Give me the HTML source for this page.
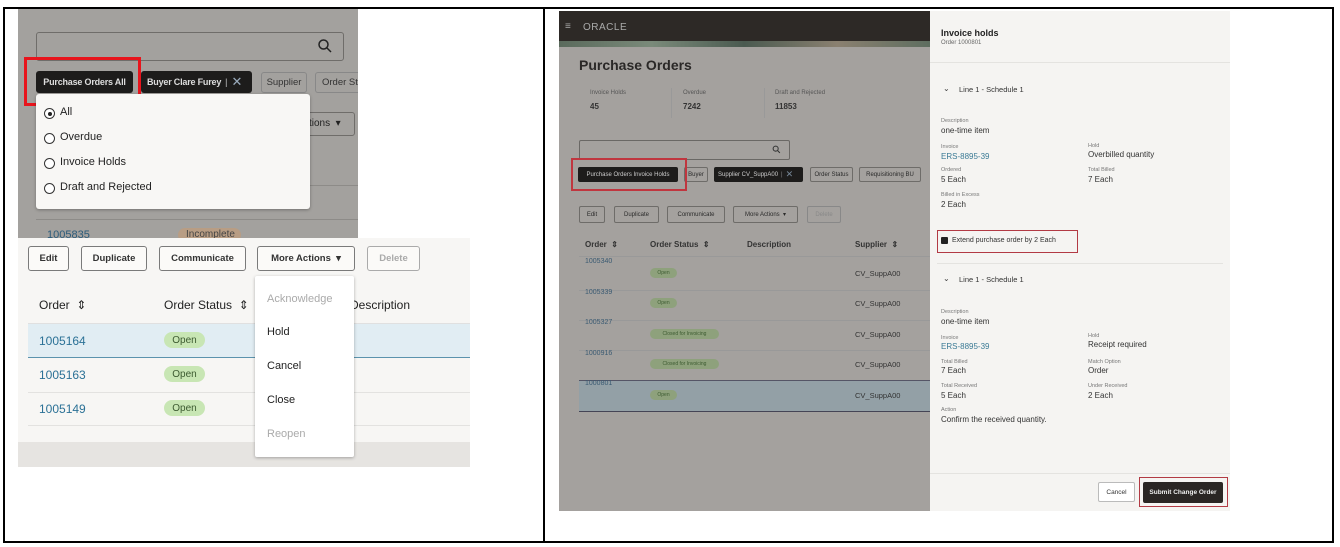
<!DOCTYPE html>
<html><head><meta charset="utf-8"><style>
*{margin:0;padding:0;box-sizing:border-box}
body{width:1340px;height:547px;background:#fff;position:relative;overflow:hidden;font-family:"Liberation Sans",sans-serif;color:#222}
.a{position:absolute}
.t{position:absolute;white-space:nowrap}
.btn{position:absolute;border:1px solid #7a7a7a;border-radius:3px;background:#fbfaf8;font-size:9.5px;color:#333;display:flex;align-items:center;justify-content:center;font-weight:bold;white-space:nowrap}
.rad{position:absolute;width:11px;height:11px;border:1px solid #333;border-radius:50%;background:#fff}
.pill{position:absolute;background:#c8e6b4;border-radius:9px;font-size:10px;color:#3c5a30;display:flex;align-items:center;justify-content:center;white-space:nowrap}
.lbl{position:absolute;font-size:5.5px;color:#777;white-space:nowrap}
.val{position:absolute;font-size:8px;color:#333;white-space:nowrap}
.rbtn{position:absolute;border:1px solid #6e6c69;border-radius:2px;font-size:6px;color:#2a2a2a;display:flex;align-items:center;justify-content:center;white-space:nowrap}
</style></head><body>
<div class="a" style="left:3px;top:7px;width:1331px;height:2px;background:#000"></div>
<div class="a" style="left:3px;top:541px;width:1331px;height:2px;background:#000"></div>
<div class="a" style="left:3px;top:7px;width:2px;height:536px;background:#000"></div>
<div class="a" style="left:1332px;top:7px;width:2px;height:536px;background:#000"></div>
<div class="a" style="left:543px;top:7px;width:2px;height:536px;background:#000"></div>

<div class="a" style="left:18px;top:9px;width:340px;height:229px;background:#a3a19e"></div>
<div class="a" style="left:36px;top:32px;width:308px;height:29px;border:1px solid #6f6d6a;border-radius:3px"></div>
<svg class="a" style="left:317px;top:38px" width="16" height="16" viewBox="0 0 16 16"><circle cx="6.5" cy="6.5" r="4.5" fill="none" stroke="#222" stroke-width="1.5"/><path d="M10 10l4 4" stroke="#222" stroke-width="1.5"/></svg>
<div class="a" style="left:36px;top:71px;width:97px;height:22px;background:#1d1c1b;border-radius:3px;color:#ddd;font-size:9px;font-weight:bold;display:flex;align-items:center;justify-content:center;white-space:nowrap;letter-spacing:-.2px">Purchase Orders All</div>
<div class="a" style="left:141px;top:71px;width:111px;height:22px;background:#1d1c1b;border-radius:3px;color:#ddd;font-size:9px;font-weight:bold;padding-left:6px;display:flex;align-items:center;white-space:nowrap;letter-spacing:-.2px">Buyer Clare Furey <span style="margin-left:4px;color:#888">|</span><span style="margin-left:4px;color:#9ab;font-size:13px;font-weight:normal">✕</span></div>
<div class="a" style="left:261px;top:72px;width:46px;height:21px;border:1px solid #888;border-radius:3px;font-size:9.5px;color:#333;display:flex;align-items:center;justify-content:center">Supplier</div>
<div class="a" style="left:315px;top:72px;width:43px;height:21px;border:1px solid #888;border-right:none;border-radius:3px 0 0 3px;font-size:9.5px;color:#333;padding-left:6px;line-height:19px;overflow:hidden;white-space:nowrap">Order St</div>
<div class="a" style="left:292px;top:112px;width:63px;height:24px;border:1px solid #6f6d6a;border-radius:3px;font-size:10px;color:#222;line-height:22px;padding-left:16px;white-space:nowrap">tions &nbsp;▾</div>
<div class="a" style="left:36px;top:185px;width:322px;height:1px;background:#8d8b88"></div>
<div class="a" style="left:36px;top:219px;width:322px;height:1px;background:#8d8b88"></div>
<div class="a" style="left:178px;top:228px;width:63px;height:14px;background:#b89d84;border-radius:7px"></div>
<div class="t" style="left:47px;top:229px;font-size:11px;color:#2b5b7a">1005835</div>
<div class="t" style="left:186px;top:229px;font-size:10px;color:#444">Incomplete</div>
<div class="a" style="left:24px;top:57px;width:117px;height:49px;border:3px solid #e8141c"></div>
<div class="a" style="left:36px;top:94px;width:274px;height:115px;background:#f8f7f5;border-radius:3px;box-shadow:0 1px 3px rgba(0,0,0,.3)"></div>
<div class="rad" style="left:44px;top:108px"><div style="position:absolute;left:2.5px;top:2.5px;width:4px;height:4px;border-radius:50%;background:#222"></div></div>
<div class="t" style="left:60px;top:106px;font-size:11px;color:#222">All</div>
<div class="rad" style="left:44px;top:133px"></div><div class="t" style="left:60px;top:131px;font-size:11px;color:#222">Overdue</div>
<div class="rad" style="left:44px;top:158px"></div><div class="t" style="left:60px;top:156px;font-size:11px;color:#222">Invoice Holds</div>
<div class="rad" style="left:44px;top:183px"></div><div class="t" style="left:60px;top:181px;font-size:11px;color:#222">Draft and Rejected</div>

<div class="a" style="left:18px;top:238px;width:452px;height:205px;background:#f7f6f4"></div>
<div class="a" style="left:18px;top:442px;width:452px;height:25px;background:#e6e4e1"></div>
<div class="btn" style="left:28px;top:246px;width:41px;height:25px">Edit</div>
<div class="btn" style="left:81px;top:246px;width:66px;height:25px">Duplicate</div>
<div class="btn" style="left:159px;top:246px;width:87px;height:25px">Communicate</div>
<div class="btn" style="left:257px;top:246px;width:98px;height:25px">More Actions &nbsp;▾</div>
<div class="btn" style="left:367px;top:246px;width:53px;height:25px;color:#aaa;border-color:#aaa">Delete</div>
<div class="t" style="left:39px;top:298px;font-size:12px;color:#222">Order &nbsp;⇕</div>
<div class="t" style="left:164px;top:298px;font-size:12px;color:#222">Order Status &nbsp;⇕</div>
<div class="t" style="left:350px;top:298px;font-size:12px;color:#222">Description</div>
<div class="a" style="left:28px;top:323px;width:442px;height:35px;background:#e1edf3;border-bottom:1px solid #5b93ad;border-top:1px solid #e0e0e0"></div>
<div class="a" style="left:28px;top:392px;width:442px;height:1px;background:#e3e2e0"></div>
<div class="a" style="left:28px;top:425px;width:442px;height:1px;background:#e3e2e0"></div>
<div class="t" style="left:39px;top:334px;font-size:12px;color:#2b7196">1005164</div>
<div class="t" style="left:39px;top:368px;font-size:12px;color:#2b7196">1005163</div>
<div class="t" style="left:39px;top:402px;font-size:12px;color:#2b7196">1005149</div>
<div class="pill" style="left:164px;top:332px;width:41px;height:16px">Open</div>
<div class="pill" style="left:164px;top:366px;width:41px;height:16px">Open</div>
<div class="pill" style="left:164px;top:400px;width:41px;height:16px">Open</div>
<div class="a" style="left:255px;top:276px;width:99px;height:181px;background:#fff;border-radius:2px;box-shadow:0 1px 3px rgba(0,0,0,.3)"></div>
<div class="t" style="left:267px;top:293px;font-size:11px;color:#aaa">Acknowledge</div>
<div class="t" style="left:267px;top:326px;font-size:11px;color:#222">Hold</div>
<div class="t" style="left:267px;top:360px;font-size:11px;color:#222">Cancel</div>
<div class="t" style="left:267px;top:394px;font-size:11px;color:#222">Close</div>
<div class="t" style="left:267px;top:428px;font-size:11px;color:#aaa">Reopen</div>

<div class="a" style="left:559px;top:11px;width:371px;height:500px;background:#a4a19e"></div>
<div class="a" style="left:559px;top:11px;width:371px;height:30px;background:#2d2926"></div>
<div class="a" style="left:559px;top:41px;width:371px;height:6px;background:linear-gradient(90deg,#5a6a5c,#7a8a7a,#4a5a50,#8a8070,#5e6e60)"></div>
<div class="t" style="left:565px;top:21px;font-size:10px;color:#aaa">≡</div>
<div class="t" style="left:583px;top:22px;font-size:10px;color:#aaa;letter-spacing:.5px">ORACLE</div>
<div class="t" style="left:579px;top:57px;font-size:14px;font-weight:bold;color:#2a2827">Purchase Orders</div>
<div class="t" style="left:590px;top:90px;font-size:6px;color:#555">Invoice Holds</div>
<div class="t" style="left:590px;top:102px;font-size:8px;font-weight:bold;color:#333">45</div>
<div class="a" style="left:671px;top:88px;width:1px;height:30px;background:#999"></div>
<div class="t" style="left:683px;top:90px;font-size:6px;color:#555">Overdue</div>
<div class="t" style="left:683px;top:102px;font-size:8px;font-weight:bold;color:#333">7242</div>
<div class="a" style="left:764px;top:88px;width:1px;height:30px;background:#999"></div>
<div class="t" style="left:775px;top:90px;font-size:6px;color:#555">Draft and Rejected</div>
<div class="t" style="left:775px;top:102px;font-size:8px;font-weight:bold;color:#333">11853</div>
<div class="a" style="left:579px;top:140px;width:211px;height:20px;border:1px solid #6a6865;border-radius:2px"></div>
<svg class="a" style="left:772px;top:145px" width="9" height="9" viewBox="0 0 16 16"><circle cx="6.5" cy="6.5" r="4.5" fill="none" stroke="#333" stroke-width="1.8"/><path d="M10 10l4 4" stroke="#333" stroke-width="1.8"/></svg>
<div class="a" style="left:578px;top:167px;width:100px;height:15px;background:#1d1c1b;border-radius:2px;font-size:6px;color:#ccc;display:flex;align-items:center;justify-content:center;white-space:nowrap">Purchase Orders Invoice Holds</div>
<div class="rbtn" style="left:684px;top:167px;width:24px;height:15px">Buyer</div>
<div class="a" style="left:714px;top:167px;width:89px;height:15px;background:#1d1c1b;border-radius:2px;font-size:6px;color:#ccc;display:flex;align-items:center;padding-left:4px;white-space:nowrap">Supplier CV_SuppA00 <span style="color:#888;margin-left:3px">|</span><span style="color:#789;margin-left:3px;font-size:9px">✕</span></div>
<div class="rbtn" style="left:810px;top:167px;width:43px;height:15px">Order Status</div>
<div class="rbtn" style="left:859px;top:167px;width:62px;height:15px">Requisitioning BU</div>
<div class="a" style="left:571px;top:158px;width:116px;height:33px;border:2px solid #c0363f"></div>
<div class="rbtn" style="left:579px;top:206px;width:26px;height:17px">Edit</div>
<div class="rbtn" style="left:614px;top:206px;width:45px;height:17px">Duplicate</div>
<div class="rbtn" style="left:667px;top:206px;width:58px;height:17px">Communicate</div>
<div class="rbtn" style="left:733px;top:206px;width:65px;height:17px">More Actions &nbsp;▾</div>
<div class="rbtn" style="left:807px;top:206px;width:34px;height:17px;color:#888;border-color:#888">Delete</div>
<div class="t" style="left:585px;top:240px;font-size:8px;font-weight:bold;color:#333">Order &nbsp;⇕</div>
<div class="t" style="left:650px;top:240px;font-size:8px;font-weight:bold;color:#333">Order Status &nbsp;⇕</div>
<div class="t" style="left:747px;top:240px;font-size:8px;font-weight:bold;color:#333">Description</div>
<div class="t" style="left:855px;top:240px;font-size:8px;font-weight:bold;color:#333">Supplier &nbsp;⇕</div>
<div class="a" style="left:579px;top:256px;width:351px;height:1px;background:#999"></div>
<div class="a" style="left:579px;top:380px;width:351px;height:31px;background:#93a0a6"></div>
<div class="a" style="left:579px;top:290px;width:351px;height:1px;background:#999"></div>
<div class="a" style="left:579px;top:320px;width:351px;height:1px;background:#999"></div>
<div class="a" style="left:579px;top:350px;width:351px;height:1px;background:#999"></div>
<div class="a" style="left:579px;top:380px;width:351px;height:1px;background:#556"></div>
<div class="a" style="left:579px;top:411px;width:351px;height:1px;background:#445"></div>
<div class="t" style="left:585px;top:258px;font-size:7px;color:#3a5a72">1005340</div>
<div class="t" style="left:585px;top:289px;font-size:7px;color:#3a5a72">1005339</div>
<div class="t" style="left:585px;top:319px;font-size:7px;color:#3a5a72">1005327</div>
<div class="t" style="left:585px;top:350px;font-size:7px;color:#3a5a72">1000916</div>
<div class="t" style="left:585px;top:380px;font-size:7px;color:#3a5a72">1000801</div>
<div class="pill" style="left:650px;top:268px;width:27px;height:10px;font-size:5px;background:#8ea17c">Open</div>
<div class="pill" style="left:650px;top:298px;width:27px;height:10px;font-size:5px;background:#8ea17c">Open</div>
<div class="pill" style="left:650px;top:329px;width:69px;height:10px;font-size:5px;background:#8ea17c">Closed for Invoicing</div>
<div class="pill" style="left:650px;top:359px;width:69px;height:10px;font-size:5px;background:#8ea17c">Closed for Invoicing</div>
<div class="pill" style="left:650px;top:390px;width:27px;height:10px;font-size:5px;background:#8ea17c">Open</div>
<div class="t" style="left:855px;top:269px;font-size:7.5px;color:#333">CV_SuppA00</div>
<div class="t" style="left:855px;top:299px;font-size:7.5px;color:#333">CV_SuppA00</div>
<div class="t" style="left:855px;top:330px;font-size:7.5px;color:#333">CV_SuppA00</div>
<div class="t" style="left:855px;top:360px;font-size:7.5px;color:#333">CV_SuppA00</div>
<div class="t" style="left:855px;top:391px;font-size:7.5px;color:#333">CV_SuppA00</div>

<div class="a" style="left:930px;top:11px;width:300px;height:500px;background:#f5f4f2"></div>
<div class="t" style="left:941px;top:28px;font-size:9px;font-weight:bold;color:#222">Invoice holds</div>
<div class="t" style="left:941px;top:40px;font-size:6px;color:#666">Order 1000801</div>
<div class="a" style="left:930px;top:62px;width:300px;height:1px;background:#e4e3e0"></div>
<div class="t" style="left:943px;top:84px;font-size:8px;color:#444">⌄</div>
<div class="t" style="left:959px;top:85px;font-size:7.5px;color:#333">Line 1 - Schedule 1</div>
<div class="lbl" style="left:941px;top:118px">Description</div><div class="val" style="left:941px;top:126px">one-time item</div>
<div class="lbl" style="left:941px;top:144px">Invoice</div><div class="val" style="left:941px;top:152px;color:#3a7a95">ERS-8895-39</div>
<div class="lbl" style="left:1088px;top:143px">Hold</div><div class="val" style="left:1088px;top:150px">Overbilled quantity</div>
<div class="lbl" style="left:941px;top:167px">Ordered</div><div class="val" style="left:941px;top:175px">5 Each</div>
<div class="lbl" style="left:1088px;top:167px">Total Billed</div><div class="val" style="left:1088px;top:175px">7 Each</div>
<div class="lbl" style="left:941px;top:192px">Billed in Excess</div><div class="val" style="left:941px;top:200px">2 Each</div>
<div class="a" style="left:941px;top:237px;width:7px;height:7px;background:#222;border-radius:1px"></div>
<div class="val" style="left:952px;top:237px;font-size:7px">Extend purchase order by 2 Each</div>
<div class="a" style="left:937px;top:230px;width:141px;height:23px;border:1.5px solid #b23a44"></div>
<div class="a" style="left:937px;top:263px;width:286px;height:1px;background:#e4e3e0"></div>
<div class="t" style="left:943px;top:274px;font-size:8px;color:#444">⌄</div>
<div class="t" style="left:959px;top:275px;font-size:7.5px;color:#333">Line 1 - Schedule 1</div>
<div class="lbl" style="left:941px;top:309px">Description</div><div class="val" style="left:941px;top:317px">one-time item</div>
<div class="lbl" style="left:941px;top:335px">Invoice</div><div class="val" style="left:941px;top:342px;color:#3a7a95">ERS-8895-39</div>
<div class="lbl" style="left:1088px;top:333px">Hold</div><div class="val" style="left:1088px;top:340px">Receipt required</div>
<div class="lbl" style="left:941px;top:359px">Total Billed</div><div class="val" style="left:941px;top:366px">7 Each</div>
<div class="lbl" style="left:1088px;top:359px">Match Option</div><div class="val" style="left:1088px;top:366px">Order</div>
<div class="lbl" style="left:941px;top:383px">Total Received</div><div class="val" style="left:941px;top:391px">5 Each</div>
<div class="lbl" style="left:1088px;top:383px">Under Received</div><div class="val" style="left:1088px;top:391px">2 Each</div>
<div class="lbl" style="left:941px;top:407px">Action</div><div class="val" style="left:941px;top:415px">Confirm the received quantity.</div>
<div class="a" style="left:930px;top:473px;width:300px;height:1px;background:#e4e3e0"></div>
<div class="a" style="left:1098px;top:482px;width:37px;height:20px;border:1px solid #bbb;border-radius:2px;background:#fff;font-size:6.5px;display:flex;align-items:center;justify-content:center;color:#333">Cancel</div>
<div class="a" style="left:1143px;top:482px;width:80px;height:21px;background:#2a2624;border-radius:2px;font-size:6.5px;font-weight:bold;color:#eee;display:flex;align-items:center;justify-content:center;white-space:nowrap">Submit Change Order</div>
<div class="a" style="left:1139px;top:477px;width:89px;height:30px;border:1.5px solid #b23a44"></div>
</body></html>
